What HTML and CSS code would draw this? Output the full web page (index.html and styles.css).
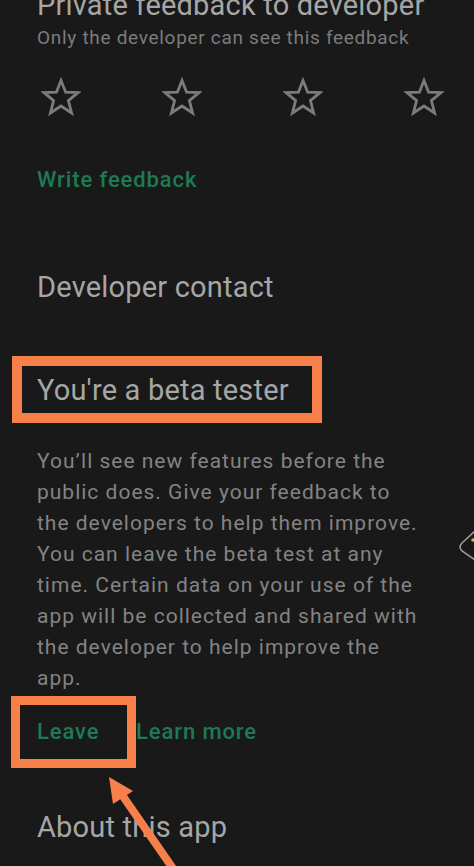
FILE: index.html
```html
<!DOCTYPE html>
<html>
<head>
<meta charset="utf-8">
<link rel="stylesheet" href="styles.css">
</head>
<body>
<div class="page">
  <section class="sec sec-private">
    <h2 class="title">Private feedback to developer</h2>
    <p class="sub">Only the developer can see this feedback</p>
    <div class="stars">
      <svg class="star" viewBox="0 0 40 40"><path d="M20 3.5 L24.6 15.2 L37 15.6 L27.4 23.6 L30.6 36 L20 29 L9.4 36 L12.6 23.6 L3 15.6 L15.4 15.2 Z"/></svg>
      <svg class="star" viewBox="0 0 40 40"><path d="M20 3.5 L24.6 15.2 L37 15.6 L27.4 23.6 L30.6 36 L20 29 L9.4 36 L12.6 23.6 L3 15.6 L15.4 15.2 Z"/></svg>
      <svg class="star" viewBox="0 0 40 40"><path d="M20 3.5 L24.6 15.2 L37 15.6 L27.4 23.6 L30.6 36 L20 29 L9.4 36 L12.6 23.6 L3 15.6 L15.4 15.2 Z"/></svg>
      <svg class="star" viewBox="0 0 40 40"><path d="M20 3.5 L24.6 15.2 L37 15.6 L27.4 23.6 L30.6 36 L20 29 L9.4 36 L12.6 23.6 L3 15.6 L15.4 15.2 Z"/></svg>
    </div>
    <a class="link write">Write feedback</a>
  </section>
  <section class="sec sec-contact">
    <h2 class="title">Developer contact</h2>
  </section>
  <section class="sec sec-beta">
    <div class="hl-box title-box"><h2 class="title">You're a beta tester</h2></div>
    <p class="body">You’ll see new features before the<br>public does. Give your feedback to<br>the developers to help them improve.<br>You can leave the beta test at any<br>time. Certain data on your use of the<br>app will be collected and shared with<br>the developer to help improve the<br>app.</p>
    <div class="actions">
      <div class="hl-box leave-box"><a class="link">Leave</a></div>
      <a class="link learn">Learn more</a>
    </div>
  </section>
  <section class="sec sec-about">
    <h2 class="title">About this app</h2>
  </section>
</div>
<svg class="arrow" width="474" height="866" viewBox="0 0 474 866">
  <line x1="174" y1="870" x2="120" y2="792" stroke="#f7804a" stroke-width="8"/>
  <polygon points="109,777 133,791 113,804" fill="#f7804a"/>
</svg>
<svg class="edge-thing" width="20" height="36" viewBox="0 0 20 36">
  <path d="M20 4 L6 17 Q2 21 6 25 L19 34" fill="none" stroke="#9a9a9a" stroke-width="1.6"/>
  <circle cx="17" cy="14" r="1.8" fill="#d4b24a"/>
</svg>
</body>
</html>
```
FILE: styles.css
```css
html, body {
  margin: 0;
  padding: 0;
  background: #191919;
  width: 474px;
  height: 866px;
  overflow: hidden;
}
body {
  position: relative;
  font-family: Roboto, "Noto Sans", sans-serif;
}
.page {
  padding: 0 0 0 37px;
  margin-top: -13px;
}
.sec { margin: 0; }
.title {
  margin: 0;
  font-size: 29px;
  font-weight: 400;
  color: #a6a6a6;
  line-height: 36px;
  letter-spacing: 0.2px;
  white-space: nowrap;
}
.sub {
  margin: 3px 0 0;
  font-size: 19px;
  line-height: 24px;
  color: #7c7c7c;
  letter-spacing: 0.7px;
  white-space: nowrap;
}
.stars {
  display: flex;
  justify-content: space-between;
  width: 403px;
  margin: 27px 0 0 4px;
}
.star {
  width: 40px;
  height: 40px;
}
.star path {
  fill: none;
  stroke: #7c7c7c;
  stroke-width: 2.8;
  stroke-linejoin: miter;
}
.link {
  color: #1d7a54;
  font-size: 22px;
  font-weight: 500;
  letter-spacing: 0.9px;
  line-height: 28px;
  white-space: nowrap;
}
.write {
  display: block;
  width: fit-content;
  margin-top: 49px;
}
.sec-contact {
  margin-top: 75px;
}
.sec-beta {
  margin-top: 51px;
}
.hl-box {
  box-sizing: border-box;
  border: 10px solid #f7804a;
}
.title-box {
  width: 310px;
  margin-left: -25px;
  padding: 6px 0 5px 15px;
}
.body {
  margin: 23px 0 0;
  font-size: 21px;
  line-height: 31px;
  color: #838383;
  letter-spacing: 1px;
  white-space: nowrap;
}
.actions {
  display: flex;
  align-items: center;
  margin-top: 2px;
}
.leave-box {
  width: 125px;
  margin-left: -26px;
  padding: 13px 0 13px 17px;
  border-width: 9px;
}
.sec-about {
  margin-top: 41px;
}
.arrow {
  position: absolute;
  left: 0;
  top: 0;
  pointer-events: none;
}
.edge-thing {
  position: absolute;
  left: 456px;
  top: 526px;
}
```
